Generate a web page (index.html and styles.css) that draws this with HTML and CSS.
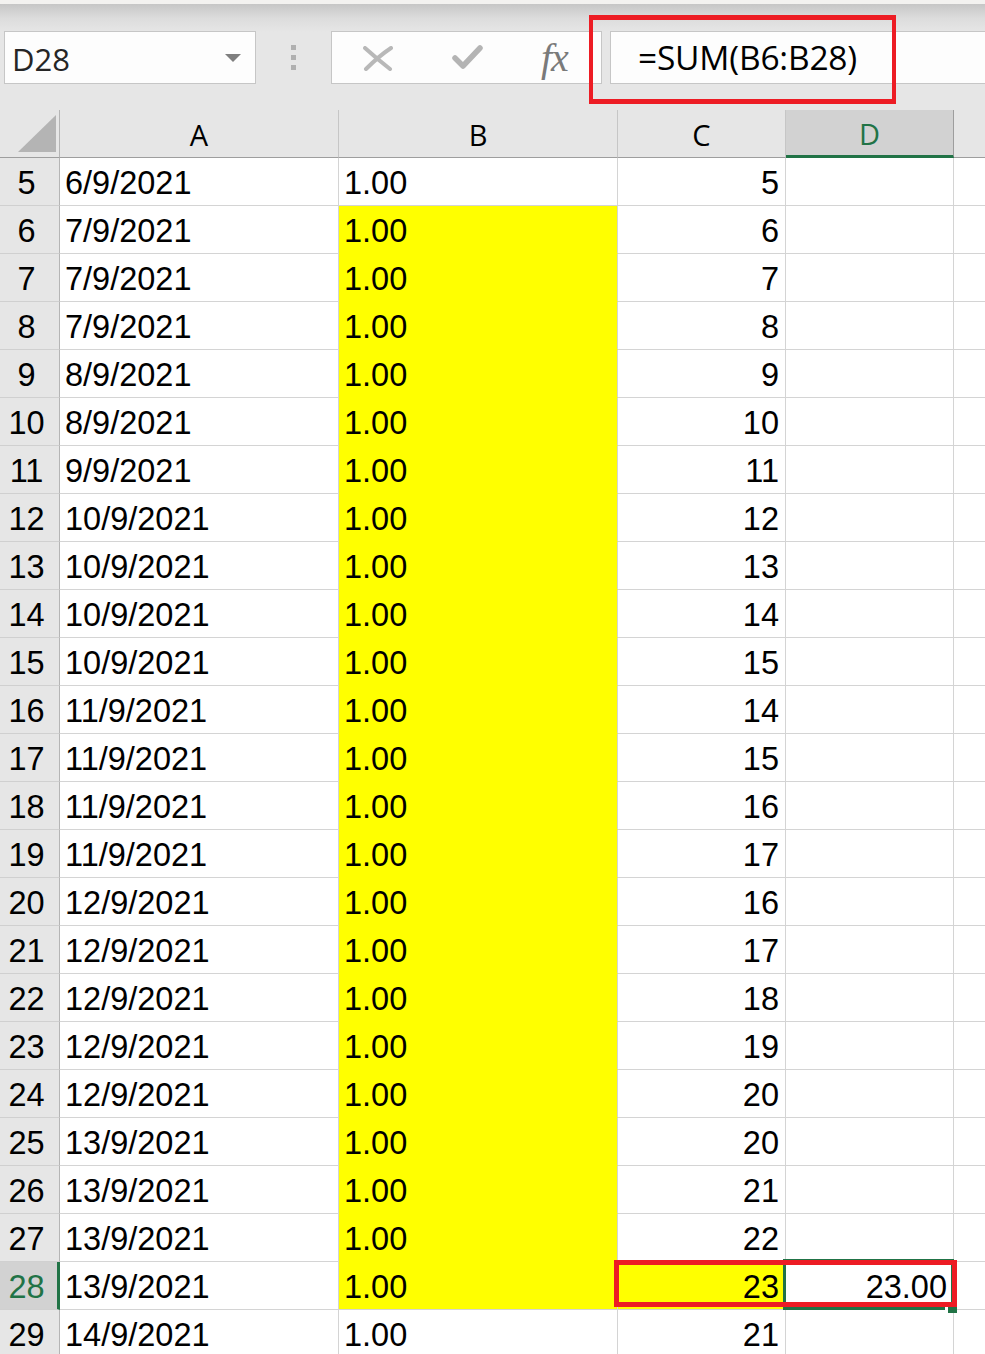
FILE: index.html
```html
<!DOCTYPE html>
<html>
<head>
<meta charset="utf-8">
<link rel="stylesheet" href="styles.css">
</head>
<body>
<div class="topstrip"></div>
<div class="toolbar">
  <div class="namebox"><span>D28</span><span class="arrow"></span></div>
  <div class="sep"><i></i><i></i><i></i></div>
  <div class="fxbox">
    <svg class="ico-x" width="30" height="25" viewBox="0 0 30 25"><path d="M2 2 Q13 12 27 23" stroke="#b8b8b8" stroke-width="4" fill="none" stroke-linecap="round"/><path d="M28 2 Q16 10 3 23" stroke="#b8b8b8" stroke-width="4" fill="none" stroke-linecap="round"/></svg>
    <svg class="ico-ok" width="31" height="25" viewBox="0 0 31 25"><path d="M3 13 L11 21 L28 3" stroke="#b4b4b4" stroke-width="5.5" fill="none" stroke-linecap="round" stroke-linejoin="round"/></svg>
    <span class="fx">fx</span>
  </div>
  <div class="formula">=SUM(B6:B28)</div>
  <div class="redbox-top"></div>
</div>
<div class="sheet">
  <div class="grid">
    <div class="corner"><span class="tri"></span></div>
    <div class="ch">A</div><div class="ch">B</div><div class="ch">C</div><div class="ch sel">D</div><div class="ch last"></div>

    <div class="rh">5</div><div class="c">6/9/2021</div><div class="c">1.00</div><div class="c num">5</div><div class="c"></div><div class="c"></div>
    <div class="rh">6</div><div class="c">7/9/2021</div><div class="c y">1.00</div><div class="c num">6</div><div class="c"></div><div class="c"></div>
    <div class="rh">7</div><div class="c">7/9/2021</div><div class="c y">1.00</div><div class="c num">7</div><div class="c"></div><div class="c"></div>
    <div class="rh">8</div><div class="c">7/9/2021</div><div class="c y">1.00</div><div class="c num">8</div><div class="c"></div><div class="c"></div>
    <div class="rh">9</div><div class="c">8/9/2021</div><div class="c y">1.00</div><div class="c num">9</div><div class="c"></div><div class="c"></div>
    <div class="rh">10</div><div class="c">8/9/2021</div><div class="c y">1.00</div><div class="c num">10</div><div class="c"></div><div class="c"></div>
    <div class="rh">11</div><div class="c">9/9/2021</div><div class="c y">1.00</div><div class="c num">11</div><div class="c"></div><div class="c"></div>
    <div class="rh">12</div><div class="c">10/9/2021</div><div class="c y">1.00</div><div class="c num">12</div><div class="c"></div><div class="c"></div>
    <div class="rh">13</div><div class="c">10/9/2021</div><div class="c y">1.00</div><div class="c num">13</div><div class="c"></div><div class="c"></div>
    <div class="rh">14</div><div class="c">10/9/2021</div><div class="c y">1.00</div><div class="c num">14</div><div class="c"></div><div class="c"></div>
    <div class="rh">15</div><div class="c">10/9/2021</div><div class="c y">1.00</div><div class="c num">15</div><div class="c"></div><div class="c"></div>
    <div class="rh">16</div><div class="c">11/9/2021</div><div class="c y">1.00</div><div class="c num">14</div><div class="c"></div><div class="c"></div>
    <div class="rh">17</div><div class="c">11/9/2021</div><div class="c y">1.00</div><div class="c num">15</div><div class="c"></div><div class="c"></div>
    <div class="rh">18</div><div class="c">11/9/2021</div><div class="c y">1.00</div><div class="c num">16</div><div class="c"></div><div class="c"></div>
    <div class="rh">19</div><div class="c">11/9/2021</div><div class="c y">1.00</div><div class="c num">17</div><div class="c"></div><div class="c"></div>
    <div class="rh">20</div><div class="c">12/9/2021</div><div class="c y">1.00</div><div class="c num">16</div><div class="c"></div><div class="c"></div>
    <div class="rh">21</div><div class="c">12/9/2021</div><div class="c y">1.00</div><div class="c num">17</div><div class="c"></div><div class="c"></div>
    <div class="rh">22</div><div class="c">12/9/2021</div><div class="c y">1.00</div><div class="c num">18</div><div class="c"></div><div class="c"></div>
    <div class="rh">23</div><div class="c">12/9/2021</div><div class="c y">1.00</div><div class="c num">19</div><div class="c"></div><div class="c"></div>
    <div class="rh">24</div><div class="c">12/9/2021</div><div class="c y">1.00</div><div class="c num">20</div><div class="c"></div><div class="c"></div>
    <div class="rh">25</div><div class="c">13/9/2021</div><div class="c y">1.00</div><div class="c num">20</div><div class="c"></div><div class="c"></div>
    <div class="rh">26</div><div class="c">13/9/2021</div><div class="c y">1.00</div><div class="c num">21</div><div class="c"></div><div class="c"></div>
    <div class="rh">27</div><div class="c">13/9/2021</div><div class="c y">1.00</div><div class="c num">22</div><div class="c"></div><div class="c"></div>
    <div class="rh sel">28</div><div class="c">13/9/2021</div><div class="c y yl">1.00</div><div class="c num y yl">23</div><div class="c num">23.00</div><div class="c"></div>
    <div class="rh">29</div><div class="c">14/9/2021</div><div class="c">1.00</div><div class="c num">21</div><div class="c"></div><div class="c"></div>
  </div>
  <div class="selection"><span class="handle"></span></div>
  <div class="redbox-cell"></div>
</div>
</body>
</html>
```
FILE: styles.css
```css
html, body {
  margin: 0;
  padding: 0;
}
body {
  width: 985px;
  height: 1354px;
  overflow: hidden;
  background: #ffffff;
  font-family: "Liberation Sans", Arial, sans-serif;
  color: #000;
}
.topstrip {
  height: 4px;
  background: #f3f2f0;
}
.toolbar {
  position: relative;
  height: 106px;
  box-sizing: border-box;
  padding-top: 27px;
  display: flex;
  align-items: flex-start;
  background: linear-gradient(#c6c6c6 0px, #dcdcdc 14px, #e6e6e6 28px, #e6e6e6 100%);
}
.namebox {
  margin-left: 4px;
  width: 252px;
  height: 53px;
  box-sizing: border-box;
  border: 1px solid #c6c6c6;
  background: #fdfdfd;
  display: flex;
  align-items: center;
  padding-left: 7px;
  font-family: "Open Sans", sans-serif;
  font-size: 31px;
  color: #262626;
}
.namebox span:first-child {
  position: relative;
  top: 1px;
}
.arrow {
  margin-left: auto;
  margin-right: 14px;
  width: 0;
  height: 0;
  border-left: 8.5px solid transparent;
  border-right: 8.5px solid transparent;
  border-top: 8px solid #7f7f7f;
}
.sep {
  width: 75px;
  padding-top: 14px;
  display: flex;
  flex-direction: column;
  align-items: center;
  gap: 5px;
}
.sep i {
  display: block;
  width: 5px;
  height: 5px;
  background: #b0b0b0;
}
.fxbox {
  width: 271px;
  height: 53px;
  box-sizing: border-box;
  border: 1px solid #c6c6c6;
  background: #fdfdfd;
  display: flex;
  align-items: center;
}
.ico-x {
  margin-left: 31px;
  margin-top: 2px;
}
.ico-ok {
  margin-left: 59px;
}
.fx {
  margin-left: 58px;
  font-family: "Liberation Serif", serif;
  font-style: italic;
  font-size: 40px;
  line-height: 40px;
  color: #7a7a7a;
  letter-spacing: -1px;
}
.formula {
  margin-left: 8px;
  flex: 1;
  margin-right: -4px;
  height: 53px;
  box-sizing: border-box;
  border: 1px solid #c6c6c6;
  background: #fdfdfd;
  padding-left: 27px;
  font-family: "Open Sans", sans-serif;
  font-size: 33.5px;
  line-height: 51px;
  color: #000;
  letter-spacing: -0.2px;
}
.redbox-top {
  position: absolute;
  left: 589px;
  top: 11px;
  width: 307px;
  height: 89px;
  box-sizing: border-box;
  border: 5px solid #ed1c24;
  border-left-width: 4px;
  border-right-width: 4px;
}
.sheet {
  position: relative;
}
.grid {
  display: grid;
  grid-template-columns: 60px 279px 279px 168px 168px 1fr;
  grid-auto-rows: 48px;
}
.corner, .ch, .rh, .c {
  box-sizing: border-box;
}
.corner {
  background: #e6e6e6;
  border-right: 1px solid #b5b5b5;
  border-bottom: 1px solid #9e9e9e;
  display: flex;
  align-items: flex-end;
  justify-content: flex-end;
  padding: 0 3px 5px 0;
}
.tri {
  width: 0;
  height: 0;
  border-left: 38px solid transparent;
  border-bottom: 37px solid #b4b4b4;
}
.ch {
  background: #e6e6e6;
  border-right: 1px solid #c6c6c6;
  border-bottom: 1px solid #9e9e9e;
  text-align: center;
  font-family: "Open Sans", sans-serif;
  font-size: 29px;
  line-height: 47px;
  padding-top: 1px;
  color: #000;
}
.ch.sel {
  background: #d2d2d2;
  color: #217346;
  border-right-color: #9e9e9e;
  border-bottom: 3px solid #217346;
  line-height: 45px;
}
.ch.last {
  border-right: none;
}
.rh {
  background: #e6e6e6;
  border-right: 1px solid #b5b5b5;
  border-bottom: 1px solid #d0d0d0;
  text-align: center;
  padding-right: 6px;
  font-size: 32.5px;
  line-height: 44px;
  padding-top: 3px;
}
.rh.sel {
  background: #d2d2d2;
  color: #217346;
  border-right: 3px solid #217346;
  padding-right: 4px;
}
.c {
  border-right: 1px solid #d4d4d4;
  border-bottom: 1px solid #d4d4d4;
  padding: 3px 6px 0 5px;
  font-size: 32.5px;
  line-height: 44px;
  white-space: nowrap;
  overflow: hidden;
}
.c:nth-child(6n) {
  border-right: none;
}
.c.num {
  text-align: right;
}
.c.y {
  background: #ffff00;
  border-bottom-color: #ffff00;
}
.c.y.yl {
  border-bottom-color: #d4d4d4;
}
.selection {
  position: absolute;
  left: 783px;
  top: 1149px;
  width: 171px;
  height: 51px;
  box-sizing: border-box;
  border: 3px solid #217346;
}
.handle {
  position: absolute;
  right: -6px;
  bottom: -6px;
  width: 9px;
  height: 6px;
  background: #217346;
  border-left: 3px solid #ffffff;
}
.redbox-cell {
  position: absolute;
  left: 614px;
  top: 1150px;
  width: 343px;
  height: 47px;
  box-sizing: border-box;
  border: 5px solid #ed1c24;
}
```
